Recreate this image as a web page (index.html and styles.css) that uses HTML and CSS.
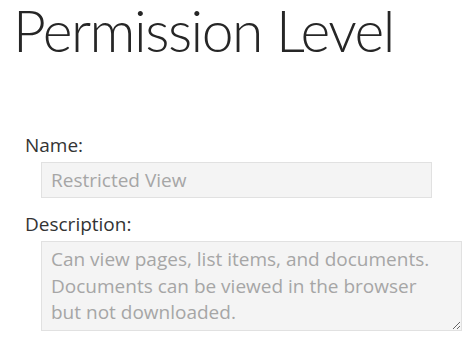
FILE: index.html
```html
<!DOCTYPE html>
<html lang="en">
<head>
<meta charset="utf-8">
<title>Permission Level</title>
<link rel="stylesheet" href="styles.css">
</head>
<body>
<div class="page">
  <h1 class="page-title">Permission Level</h1>
  <form class="form">
    <div class="field">
      <label class="field-label" for="name">Name:</label>
      <input class="field-input" id="name" type="text" value="Restricted View" readonly>
    </div>
    <div class="field">
      <label class="field-label" for="desc">Description:</label>
      <textarea class="field-textarea" id="desc" readonly>Can view pages, list items, and documents. Documents can be viewed in the browser but not downloaded.</textarea>
    </div>
  </form>
</div>
</body>
</html>
```

FILE: styles.css
```css
html, body {
  margin: 0;
  padding: 0;
  background: #ffffff;
}

.page {
  font-family: "Open Sans", "Noto Sans", sans-serif;
  color: #333333;
}

.page-title {
  margin: 0;
  padding-left: 13px;
  font-family: "Lato", "Open Sans", sans-serif;
  font-size: 57px;
  line-height: 60px;
  font-weight: 300;
  letter-spacing: -1.5px;
  color: #262626;
}

.form {
  display: flex;
  flex-direction: column;
  gap: 14px;
  padding: 73px 12px 0 25px;
}

.field {
  display: flex;
  flex-direction: column;
  gap: 5px;
}

.field-label {
  font-size: 19px;
  line-height: 24px;
  color: #333333;
}

.field-input,
.field-textarea {
  box-sizing: border-box;
  margin: 0 0 0 16px;
  font-family: "Open Sans", "Noto Sans", sans-serif;
  font-size: 19px;
  color: #a6a6a6;
  background: #f4f4f4;
  border: 1px solid #e1e1e1;
  border-radius: 0;
  outline: none;
}

.field-input {
  width: 391px;
  height: 36px;
  padding: 0 9px;
  line-height: 34px;
}

.field-textarea {
  width: 421px;
  height: 90px;
  padding: 4px 14px 4px 9px;
  line-height: 26.5px;
  resize: both;
  overflow: hidden;
}
```
